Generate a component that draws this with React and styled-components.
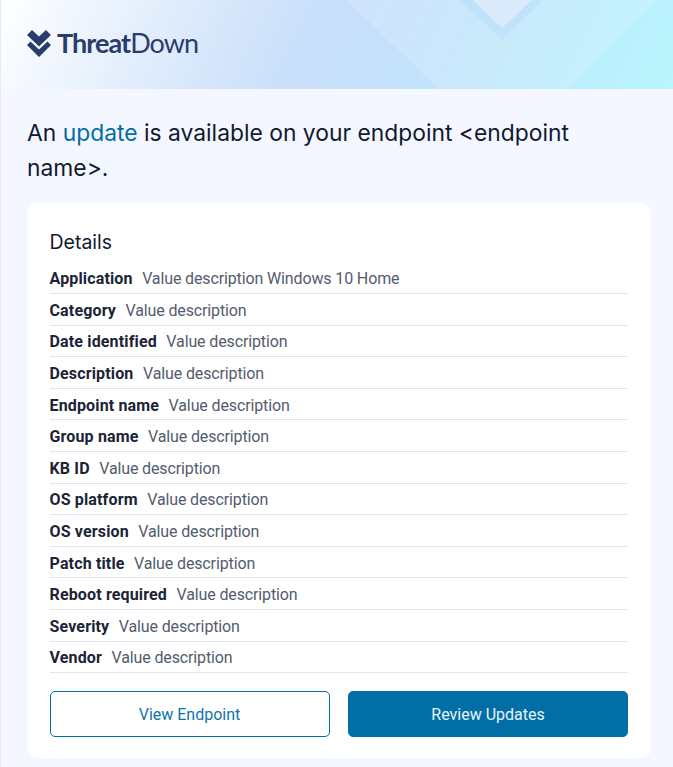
import React from "react";
import styled, { createGlobalStyle } from "styled-components";

const Global = createGlobalStyle`
  html, body { margin: 0; padding: 0; background: #f4f7ff; }
  * { box-sizing: border-box; }
`;

const Page = styled.div`
  width: 673px;
  height: 767px;
  overflow: hidden;
  background: #f4f7ff;
  font-family: Roboto, "Liberation Sans", sans-serif;
  border-left: 1px solid #e6eaf5;
`;

const Header = styled.header`
  position: relative;
  height: 89px;
  overflow: hidden;
  display: flex;
  align-items: center;
  padding: 0 0 3px 26px;
  background: linear-gradient(115deg, #ffffff 0%, #e3eefc 22%, #c9dffa 45%, #c3e2fb 62%, #bdebfc 80%, #b9f6fe 100%);
`;

const Decoration = styled.svg`
  position: absolute;
  inset: 0;
  width: 100%;
  height: 100%;
`;

const Logo = styled.div`
  position: relative;
  display: flex;
  align-items: center;
  gap: 6px;
`;

const LogoText = styled.span`
  font-family: Lato, sans-serif;
  font-size: 27px;
  line-height: 30px;
  letter-spacing: -0.95px;
  color: #2a3c6b;
  font-weight: 400;
`;

const LogoBold = styled.b`
  font-weight: 700;
`;

const Main = styled.main`
  padding: 27px 22px 0 26px;
`;

const Title = styled.h1`
  margin: 0 0 17px;
  max-width: 560px;
  font-family: Inter, Roboto, sans-serif;
  font-size: 22.85px;
  line-height: 35px;
  font-weight: 400;
  color: #111a2e;
`;

const Accent = styled.span`
  color: #016ea6;
`;

const Card = styled.section`
  background: #ffffff;
  border-radius: 10px;
  height: 555px;
  padding: 26px 23px 22px 22.5px;
`;

const CardTitle = styled.h2`
  margin: 0 0 5.4px;
  font-family: Inter, Roboto, sans-serif;
  font-size: 19.5px;
  line-height: 27px;
  padding-bottom: 1px;
  font-weight: 400;
  color: #111a2e;
`;

const Row = styled.div`
  height: 31.6px;
  display: flex;
  align-items: center;
  gap: 9.5px;
  padding-top: 2px;
  font-size: 16px;
  border-bottom: 1px solid #e3e6ec;
`;

const Label = styled.span`
  font-weight: 700;
  letter-spacing: 0.15px;
  color: #1b2436;
`;

const Value = styled.span`
  letter-spacing: -0.13px;
  color: #535c6e;
`;

const Actions = styled.div`
  display: grid;
  grid-template-columns: 280px 280px;
  justify-content: space-between;
  margin-top: 18px;
`;

const Button = styled.button`
  height: 45.5px;
  padding: 2px 0 0;
  border-radius: 5px;
  font-family: inherit;
  font-size: 16px;
  border: 1.5px solid #016ea6;
  color: ${(p) => (p.$primary ? "#e8f3fa" : "#0f74a9")};
  background: ${(p) => (p.$primary ? "#016ea6" : "#ffffff")};
`;

const rows = [
  ["Application", "Value description Windows 10 Home"],
  ["Category", "Value description"],
  ["Date identified", "Value description"],
  ["Description", "Value description"],
  ["Endpoint name", "Value description"],
  ["Group name", "Value description"],
  ["KB ID", "Value description"],
  ["OS platform", "Value description"],
  ["OS version", "Value description"],
  ["Patch title", "Value description"],
  ["Reboot required", "Value description"],
  ["Severity", "Value description"],
  ["Vendor", "Value description"],
];

export default function App() {
  return (
    <Page>
      <Global />
      <Header>
        <Decoration viewBox="0 0 672 89" preserveAspectRatio="none">
          <polygon points="346,0 656,0 566,89 437,89" fill="#ffffff" opacity="0.14" />
          <polygon points="459,0 501,40 542,0" fill="#b8dbfa" opacity="0.5" />
          <polygon points="472,0 501,28 531,0" fill="#dbebfc" />
        </Decoration>
        <Logo>
          <svg width="24" height="27" viewBox="0 0 24 27">
            <path d="M0 5 5 0 12 6.5 19 0 24 5 12 16.5Z" fill="#2a3c6b" />
            <path d="M0 15 3.5 11.5 12 19.5 20.5 11.5 24 15 12 27Z" fill="#2a3c6b" />
          </svg>
          <LogoText><LogoBold>Threat</LogoBold>Down</LogoText>
        </Logo>
      </Header>
      <Main>
        <Title>An <Accent>update</Accent> is available on your endpoint &lt;endpoint name&gt;.</Title>
        <Card>
          <CardTitle>Details</CardTitle>
          {rows.map(([l, v]) => (
            <Row key={l}><Label>{l}</Label><Value>{v}</Value></Row>
          ))}
          <Actions>
            <Button>View Endpoint</Button>
            <Button $primary>Review Updates</Button>
          </Actions>
        </Card>
      </Main>
    </Page>
  );
}
